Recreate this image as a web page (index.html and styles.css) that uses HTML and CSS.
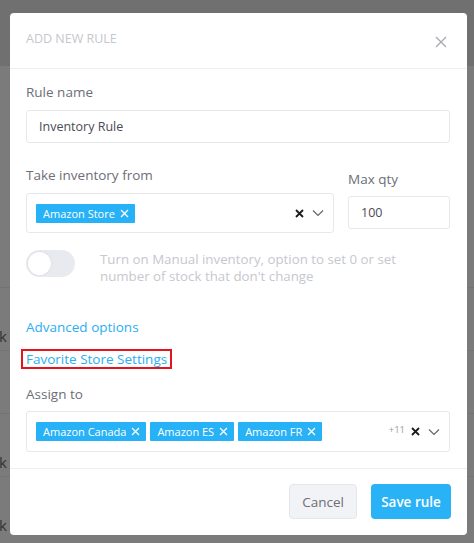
FILE: index.html
```html
<!DOCTYPE html>
<html lang="en">
<head>
<meta charset="utf-8">
<title>Add new rule</title>
<link rel="stylesheet" href="styles.css">
</head>
<body>
<div class="backdrop">
  <div class="bg-top"></div>
  <div class="bg-rows">
    <div class="bg-row"><span class="bg-k">k</span></div>
    <div class="bg-row"></div>
    <div class="bg-row"><span class="bg-k">k</span></div>
    <div class="bg-row"><span class="bg-k">k</span></div>
  </div>
</div>

<div class="modal">
  <div class="modal-header">
    <h2 class="modal-title">Add new rule</h2>
    <button class="close-btn" aria-label="Close">
      <svg width="12" height="12" viewBox="0 0 12 12"><path d="M1 1L11 11M11 1L1 11" stroke="#a9abb2" stroke-width="1.4" fill="none"/></svg>
    </button>
  </div>

  <div class="modal-body">
    <label class="label">Rule name</label>
    <div class="input input-text">Inventory Rule</div>

    <div class="split">
      <div class="col-main">
        <label class="label">Take inventory from</label>
        <div class="select select-single">
          <div class="tags">
            <span class="tag">Amazon Store <svg class="tag-x" width="9" height="9" viewBox="0 0 9 9"><path d="M1 1L8 8M8 1L1 8" stroke="#fff" stroke-width="1.3" fill="none"/></svg></span>
          </div>
          <div class="select-actions">
            <svg width="9" height="9" viewBox="0 0 9 9"><path d="M1 1L8 8M8 1L1 8" stroke="#1c1c1c" stroke-width="1.8" fill="none"/></svg>
            <svg width="12" height="8" viewBox="0 0 12 8"><path d="M1 1.5L6 6.5L11 1.5" stroke="#666" stroke-width="1.2" fill="none"/></svg>
          </div>
        </div>
      </div>
      <div class="col-side">
        <label class="label">Max qty</label>
        <div class="input input-text">100</div>
      </div>
    </div>

    <div class="toggle-row">
      <div class="toggle"><span class="knob"></span></div>
      <p class="toggle-text">Turn on Manual inventory, option to set 0 or set number of stock that don't change</p>
    </div>

    <a class="link link-adv">Advanced options</a>
    <a class="link link-fav">Favorite Store Settings</a>

    <label class="label label-assign">Assign to</label>
    <div class="select select-multi">
      <div class="tags">
        <span class="tag">Amazon Canada <svg class="tag-x" width="9" height="9" viewBox="0 0 9 9"><path d="M1 1L8 8M8 1L1 8" stroke="#fff" stroke-width="1.3" fill="none"/></svg></span>
        <span class="tag">Amazon ES <svg class="tag-x" width="9" height="9" viewBox="0 0 9 9"><path d="M1 1L8 8M8 1L1 8" stroke="#fff" stroke-width="1.3" fill="none"/></svg></span>
        <span class="tag">Amazon FR <svg class="tag-x" width="9" height="9" viewBox="0 0 9 9"><path d="M1 1L8 8M8 1L1 8" stroke="#fff" stroke-width="1.3" fill="none"/></svg></span>
      </div>
      <div class="select-actions">
        <span class="more">+11</span>
        <svg width="9" height="9" viewBox="0 0 9 9"><path d="M1 1L8 8M8 1L1 8" stroke="#1c1c1c" stroke-width="1.8" fill="none"/></svg>
        <svg width="12" height="8" viewBox="0 0 12 8"><path d="M1 1.5L6 6.5L11 1.5" stroke="#666" stroke-width="1.2" fill="none"/></svg>
      </div>
    </div>
  </div>

  <div class="modal-footer">
    <button class="btn btn-cancel">Cancel</button>
    <button class="btn btn-save">Save rule</button>
  </div>
</div>
</body>
</html>
```

FILE: styles.css
```css
* { box-sizing: border-box; }

html, body {
  margin: 0;
  padding: 0;
  width: 474px;
  height: 543px;
  overflow: hidden;
}

body {
  background: #7b7b7b;
  font-family: "Open Sans", "Noto Sans", sans-serif;
  position: relative;
}

.backdrop {
  display: flex;
  flex-direction: column;
  height: 543px;
}

.bg-top {
  height: 66px;
  background: #707070;
}

.bg-rows {
  margin-top: 221px;
  display: flex;
  flex-direction: column;
}

.bg-row {
  height: 63px;
  border-top: 1px solid #737373;
  display: flex;
  align-items: flex-end;
  padding-bottom: 6px;
}

.bg-k {
  font-size: 15px;
  color: #333;
  margin-left: -1px;
  line-height: 16px;
}

.modal {
  position: absolute;
  left: 10px;
  top: 13px;
  width: 457px;
  height: 522px;
  background: #fff;
  border-radius: 4px;
  display: flex;
  flex-direction: column;
}

.modal-header {
  height: 56px;
  display: flex;
  align-items: center;
  justify-content: space-between;
  padding: 0 20px 0 16px;
  border-bottom: 1px solid #eceef1;
}

.modal-title {
  margin: 0;
  font-size: 12.5px;
  font-weight: 500;
  text-transform: uppercase;
  color: #c6c7cc;
  margin-top: -5px;
}

.close-btn {
  border: none;
  background: none;
  padding: 0;
  display: flex;
  margin-top: 3px;
}

.modal-body {
  padding: 13px 17px 0 16px;
  display: flex;
  flex-direction: column;
  flex: 1;
}

.label {
  display: block;
  font-size: 13.5px;
  line-height: 20px;
  color: #6c6e79;
  margin-bottom: 8px;
}

.input {
  border: 1px solid #e6e8ec;
  border-radius: 3px;
  height: 33px;
  display: flex;
  align-items: center;
  padding-left: 12px;
  font-size: 12.5px;
  color: #4a4b55;
}

.split {
  display: flex;
  align-items: center;
  gap: 14px;
  margin-top: 22px;
}

.col-main {
  flex: 1;
}

.col-side {
  width: 102px;
  display: flex;
  flex-direction: column;
}

.col-side .label {
  margin-bottom: 7px;
}

.select {
  border: 1px solid #e6e8ec;
  border-radius: 3px;
  display: flex;
  align-items: center;
  justify-content: space-between;
  padding: 0 9px 0 9px;
}

.select-single {
  height: 40px;
}

.select-multi {
  height: 41px;
}

.tags {
  display: flex;
  gap: 4px;
}

.tag {
  background: #27b1f6;
  color: #fff;
  font-size: 11px;
  height: 19px;
  display: inline-flex;
  align-items: center;
  padding: 0 6px 0 7px;
  border-radius: 1px;
  gap: 5px;
}

.tag-x {
  display: block;
}

.select-actions {
  display: flex;
  align-items: center;
  gap: 8px;
}

.more {
  font-size: 9.5px;
  color: #9a9ca3;
  margin-right: -2px;
  margin-top: -4px;
}

.toggle-row {
  display: flex;
  align-items: flex-start;
  gap: 25px;
  margin-top: 17px;
}

.toggle {
  width: 49px;
  height: 27px;
  border-radius: 14px;
  background: #e9eaef;
  padding: 2px;
  flex: none;
}

.knob {
  display: block;
  width: 23px;
  height: 23px;
  border-radius: 50%;
  background: #fff;
  box-shadow: 0 0 2px rgba(0,0,0,0.12);
}

.toggle-text {
  margin: 1px 0 0;
  font-size: 13.3px;
  line-height: 17px;
  color: #c6c8ce;
  max-width: 310px;
}

.link {
  color: #2aaef2;
  font-size: 13.5px;
  line-height: 20px;
  align-self: flex-start;
}

.link-adv {
  margin-top: 32px;
}

.link-fav {
  margin-top: 12px;
  margin-left: -5px;
  line-height: 16px;
  padding: 0 3px;
  border: 2px solid #e3141c;
}

.label-assign {
  margin-top: 15px;
  margin-bottom: 7px;
}

.modal-footer {
  height: 67px;
  border-top: 1px solid #eceef1;
  display: flex;
  align-items: center;
  justify-content: flex-end;
  gap: 14px;
  padding: 0 16px 1px 0;
}

.btn {
  font-family: inherit;
  height: 35px;
  border-radius: 4px;
  font-size: 13.5px;
  cursor: pointer;
}

.btn-cancel {
  width: 68px;
  background: #f2f3f6;
  border: 1px solid #e4e6ea;
  color: #6c6e78;
}

.btn-save {
  width: 80px;
  background: #29b3f6;
  border: none;
  color: #fff;
  font-weight: 600;
}
```
